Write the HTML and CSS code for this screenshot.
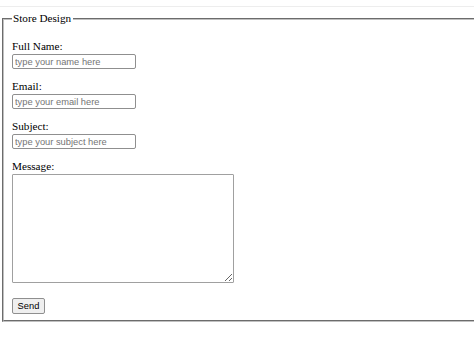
FILE: index.html
```html
<!DOCTYPE html>
<html lang="en">
<head>
    <meta charset="UTF-8">
    <meta name="viewport" content="width=device-width, initial-scale=1.0">
    <title>Store Design</title>
    <link rel="stylesheet" href="styles.css">
</head>
<body>
    <div class="top-rule"></div>
    <form class="store-form">
        <fieldset>
            <legend>Store Design</legend>

            <div class="field">
                <label for="fullname">Full Name:</label>
                <input type="text" id="fullname" placeholder="type your name here">
            </div>

            <div class="field">
                <label for="email">Email:</label>
                <input type="text" id="email" placeholder="type your email here">
            </div>

            <div class="field">
                <label for="subject">Subject:</label>
                <input type="text" id="subject" placeholder="type your subject here">
            </div>

            <div class="field">
                <label for="message">Message:</label>
                <textarea id="message"></textarea>
            </div>

            <button type="submit">Send</button>
        </fieldset>
    </form>
</body>
</html>
```

FILE: styles.css
```css
html, body {
    margin: 0;
    padding: 0;
    background-color: #fff;
}
body {
    font-family: "Liberation Serif", "Times New Roman", serif;
    font-size: 11.2px;
    color: #000;
}
.top-rule {
    margin-top: 6px;
    height: 1px;
    background-color: #ededed;
}
.store-form {
    margin: 4px 0 0 2px;
}
fieldset {
    margin: 0;
    padding: 13px 8px 6px 8px;
    border: 2px groove #c0c0c0;
    border-right: none;
    display: flex;
    flex-direction: column;
    align-items: flex-start;
}
legend {
    padding: 0 2px 0 1px;
    line-height: 15px;
}
.field {
    display: flex;
    flex-direction: column;
    align-items: flex-start;
    margin-bottom: 10px;
}
.field:last-of-type {
    margin-bottom: 15px;
}
label {
    line-height: 15px;
}
input, textarea, button {
    font-family: "Liberation Sans", Arial, sans-serif;
    font-size: 9.33px;
    box-sizing: border-box;
    margin: 0;
}
input {
    width: 124px;
    height: 15px;
    padding: 0 2px;
    border: 1px solid #8f8f8f;
    border-radius: 2px;
}
input::placeholder {
    color: #757575;
}
textarea {
    width: 222px;
    height: 109px;
    border: 1px solid #a0a0a0;
    border-radius: 1px;
}
button {
    width: 33px;
    height: 16px;
    padding: 0;
    background-color: #efefef;
    border: 1px solid #8f8f8f;
    border-radius: 2px;
    color: #000;
}
```
